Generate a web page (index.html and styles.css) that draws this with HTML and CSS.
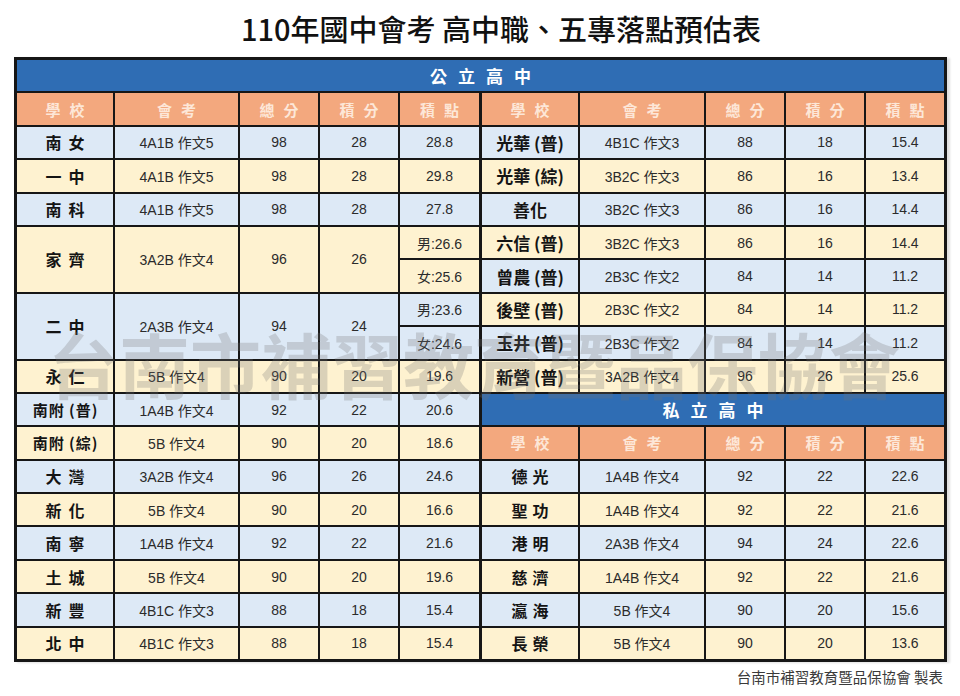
FILE: index.html
```html
<!DOCTYPE html>
<html lang="zh-Hant">
<head>
<meta charset="utf-8">
<title>110年國中會考 高中職、五專落點預估表</title>
<link rel="stylesheet" href="styles.css">
</head>
<body>
<h1 class="title">110年國中會考 高中職、五專落點預估表</h1>
<div class="wrap">
  <div class="grid">
    <div class="bar full">公立高中</div>

    <div class="hd">學校</div><div class="hd">會考</div><div class="hd">總分</div><div class="hd">積分</div><div class="hd">積點</div>
    <div class="hd mid">學校</div><div class="hd">會考</div><div class="hd">總分</div><div class="hd">積分</div><div class="hd">積點</div>

    <div class="c b nm">南女</div><div class="c b">4A1B 作文5</div><div class="c b">98</div><div class="c b">28</div><div class="c b">28.8</div>
    <div class="c b nm mid">光華 (普)</div><div class="c b">4B1C 作文3</div><div class="c b">88</div><div class="c b">18</div><div class="c b">15.4</div>

    <div class="c y nm">一中</div><div class="c y">4A1B 作文5</div><div class="c y">98</div><div class="c y">28</div><div class="c y">29.8</div>
    <div class="c y nm mid">光華 (綜)</div><div class="c y">3B2C 作文3</div><div class="c y">86</div><div class="c y">16</div><div class="c y">13.4</div>

    <div class="c b nm">南科</div><div class="c b">4A1B 作文5</div><div class="c b">98</div><div class="c b">28</div><div class="c b">27.8</div>
    <div class="c b nm mid">善化</div><div class="c b">3B2C 作文3</div><div class="c b">86</div><div class="c b">16</div><div class="c b">14.4</div>

    <div class="c y nm r2">家齊</div><div class="c y r2">3A2B 作文4</div><div class="c y r2">96</div><div class="c y r2">26</div><div class="c y">男:26.6</div>
    <div class="c y nm mid">六信 (普)</div><div class="c y">3B2C 作文3</div><div class="c y">86</div><div class="c y">16</div><div class="c y">14.4</div>

    <div class="c y">女:25.6</div>
    <div class="c b nm mid">曾農 (普)</div><div class="c b">2B3C 作文2</div><div class="c b">84</div><div class="c b">14</div><div class="c b">11.2</div>

    <div class="c b nm r2">二中</div><div class="c b r2">2A3B 作文4</div><div class="c b r2">94</div><div class="c b r2">24</div><div class="c b">男:23.6</div>
    <div class="c y nm mid">後壁 (普)</div><div class="c y">2B3C 作文2</div><div class="c y">84</div><div class="c y">14</div><div class="c y">11.2</div>

    <div class="c b">女:24.6</div>
    <div class="c b nm mid">玉井 (普)</div><div class="c b">2B3C 作文2</div><div class="c b">84</div><div class="c b">14</div><div class="c b">11.2</div>

    <div class="c y nm">永仁</div><div class="c y">5B 作文4</div><div class="c y">90</div><div class="c y">20</div><div class="c y">19.6</div>
    <div class="c y nm mid">新營 (普)</div><div class="c y">3A2B 作文4</div><div class="c y">96</div><div class="c y">26</div><div class="c y">25.6</div>

    <div class="c b nm sm">南附 (普)</div><div class="c b">1A4B 作文4</div><div class="c b">92</div><div class="c b">22</div><div class="c b">20.6</div>
    <div class="bar half mid">私立高中</div>

    <div class="c y nm sm">南附 (綜)</div><div class="c y">5B 作文4</div><div class="c y">90</div><div class="c y">20</div><div class="c y">18.6</div>
    <div class="hd mid">學校</div><div class="hd">會考</div><div class="hd">總分</div><div class="hd">積分</div><div class="hd">積點</div>

    <div class="c b nm">大灣</div><div class="c b">3A2B 作文4</div><div class="c b">96</div><div class="c b">26</div><div class="c b">24.6</div>
    <div class="c b nm mid pair">德光</div><div class="c b">1A4B 作文4</div><div class="c b">92</div><div class="c b">22</div><div class="c b">22.6</div>

    <div class="c y nm">新化</div><div class="c y">5B 作文4</div><div class="c y">90</div><div class="c y">20</div><div class="c y">16.6</div>
    <div class="c y nm mid pair">聖功</div><div class="c y">1A4B 作文4</div><div class="c y">92</div><div class="c y">22</div><div class="c y">21.6</div>

    <div class="c b nm">南寧</div><div class="c b">1A4B 作文4</div><div class="c b">92</div><div class="c b">22</div><div class="c b">21.6</div>
    <div class="c b nm mid pair">港明</div><div class="c b">2A3B 作文4</div><div class="c b">94</div><div class="c b">24</div><div class="c b">22.6</div>

    <div class="c y nm">土城</div><div class="c y">5B 作文4</div><div class="c y">90</div><div class="c y">20</div><div class="c y">19.6</div>
    <div class="c y nm mid pair">慈濟</div><div class="c y">1A4B 作文4</div><div class="c y">92</div><div class="c y">22</div><div class="c y">21.6</div>

    <div class="c b nm">新豐</div><div class="c b">4B1C 作文3</div><div class="c b">88</div><div class="c b">18</div><div class="c b">15.4</div>
    <div class="c b nm mid pair">瀛海</div><div class="c b">5B 作文4</div><div class="c b">90</div><div class="c b">20</div><div class="c b">15.6</div>

    <div class="c y nm">北中</div><div class="c y">4B1C 作文3</div><div class="c y">88</div><div class="c y">18</div><div class="c y">15.4</div>
    <div class="c y nm mid pair">長榮</div><div class="c y">5B 作文4</div><div class="c y">90</div><div class="c y">20</div><div class="c y">13.6</div>
  </div>
  <div class="watermark">台南市補習教育暨品保協會</div>
</div>
<div class="footer">台南市補習教育暨品保協會 製表</div>
</body>
</html>
```

FILE: styles.css
```css
html, body {
  margin: 0;
  padding: 0;
  background: #ffffff;
}

body {
  width: 960px;
  height: 696px;
  overflow: hidden;
  font-family: "Liberation Sans", "Noto Sans CJK TC", sans-serif;
  color: #2a2a2a;
}

.title {
  margin: 0;
  height: 57px;
  display: flex;
  align-items: center;
  justify-content: center;
  padding: 0 0 2px 42px;
  box-sizing: border-box;
  font-family: "Noto Sans CJK TC", sans-serif;
  font-size: 29px;
  font-weight: 500;
  color: #111111;
  letter-spacing: 0;
}

.wrap {
  position: relative;
  margin-left: 14px;
  width: 933px;
}

.grid {
  display: grid;
  grid-template-columns: 96px 123px 78px 78px 79px 97px 124px 78px 78px 78px;
  grid-auto-rows: 31.4px;
  gap: 2px;
  padding: 3px;
  background: #161616;
  box-shadow: 3px 1px 2px rgba(0, 0, 0, 0.12);
}

.bar {
  background: #2f6db4;
  color: #ffffff;
  font-family: "Noto Sans CJK TC", sans-serif;
  font-weight: 700;
  font-size: 17px;
  letter-spacing: 11px;
  padding-left: 11px;
  display: flex;
  align-items: center;
  justify-content: center;
}

.full {
  grid-column: 1 / -1;
}

.half {
  grid-column: span 5;
}

.mid {
  margin-left: 1px;
}

.hd {
  background: #f3a87e;
  color: #fde7d8;
  font-family: "Noto Sans CJK TC", sans-serif;
  font-weight: 700;
  font-size: 15px;
  letter-spacing: 9px;
  padding-left: 9px;
  display: flex;
  align-items: center;
  justify-content: center;
}

.c {
  display: flex;
  align-items: center;
  justify-content: center;
  font-size: 14px;
  color: #2b2b2b;
}

.b {
  background: #dde9f6;
}

.y {
  background: #fef2d0;
}

.r2 {
  grid-row: span 2;
}

.nm {
  font-family: "Noto Sans CJK TC", sans-serif;
  font-weight: 700;
  font-size: 16px;
  color: #141414;
  letter-spacing: 7px;
  padding-left: 7px;
}

.nm.mid {
  letter-spacing: 0;
  padding-left: 0;
  font-size: 17px;
}

.nm.mid.pair {
  letter-spacing: 5px;
  padding-left: 5px;
  font-size: 16px;
}

.nm.sm {
  letter-spacing: 1px;
  padding-left: 1px;
  font-size: 15px;
}

.watermark {
  position: absolute;
  left: 34px;
  top: 270px;
  font-family: "Noto Sans CJK TC", sans-serif;
  font-weight: 700;
  font-size: 71px;
  line-height: 1;
  color: rgba(115, 115, 115, 0.26);
  white-space: nowrap;
  pointer-events: none;
}

.footer {
  text-align: right;
  padding-right: 17px;
  height: 34px;
  line-height: 30px;
  font-family: "Noto Sans CJK TC", sans-serif;
  font-size: 14.5px;
  color: #3a3a3a;
}
```
